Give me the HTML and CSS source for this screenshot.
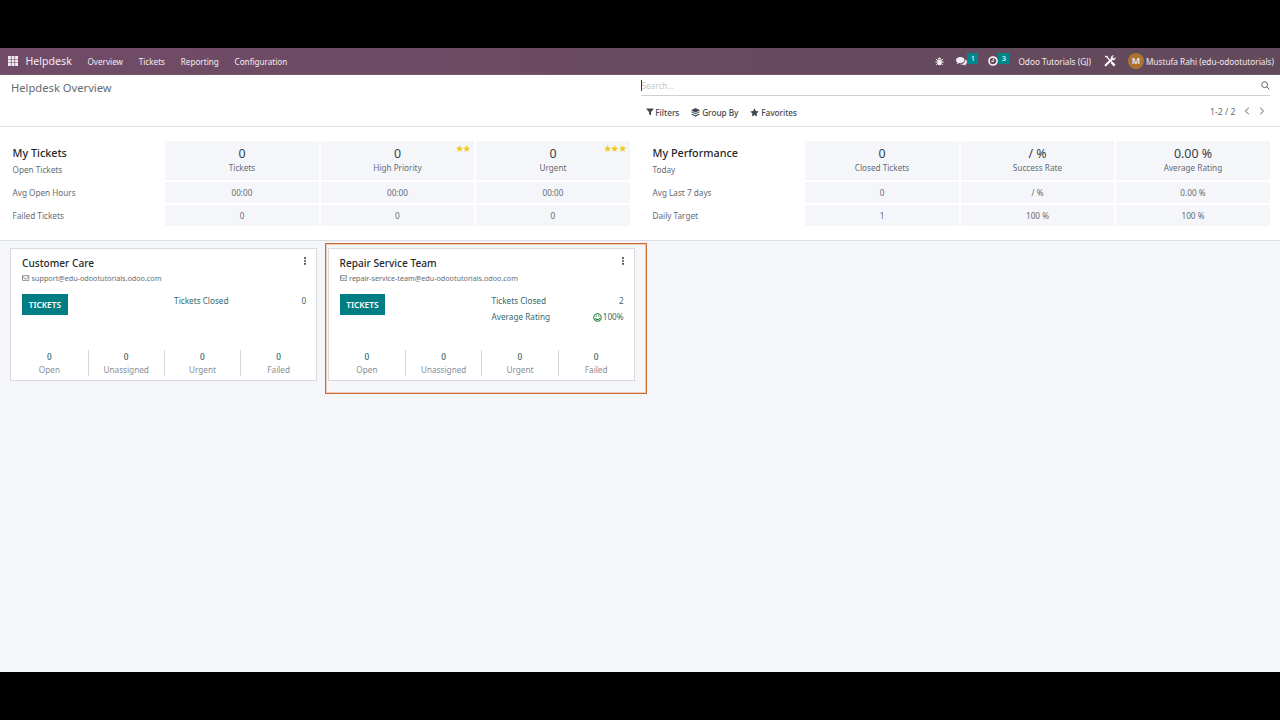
FILE: index.html
```html
<!DOCTYPE html>
<html lang="en">
<head>
<meta charset="UTF-8">
<meta name="viewport" content="width=device-width, initial-scale=1.0">
<title>Helpdesk Overview</title>
<link rel="stylesheet" href="styles.css">
</head>
<body>

<!-- shared icon shapes -->
<svg class="defs" width="0" height="0">
    <symbol id="star" viewBox="0 0 16 16"><path d="M8 .6l2.300 4.800 5.300.7-3.900 3.700 1 5.200L8 12.400 3.300 15l1-5.200L.4 6.100l5.300-.7z"/></symbol>
    <symbol id="mail" viewBox="0 0 16 12"><path d="M1 1h14v10H1zM1 3l5.500 4.300q1.500 1.100 3 0L15 3" fill="none" stroke="currentColor" stroke-width="1.600"/></symbol>
    <symbol id="dots" viewBox="0 0 4 12"><path d="M.8.500h2.400v2.400H.8zM.8 4.800h2.400v2.400H.8zM.8 9.100h2.400v2.400H.8z"/></symbol>
</svg>

<div class="screen">
    <nav class="navbar">
        <svg class="apps" viewBox="0 0 9 9"><path d="M0 0h2.600v2.600H0zM3.200 0h2.600v2.600H3.200zM6.400 0H9v2.600H6.400zM0 3.200h2.600v2.600H0zM3.200 3.200h2.600v2.600H3.200zM6.400 3.200H9v2.600H6.400zM0 6.400h2.600V9H0zM3.200 6.400h2.600V9H3.200zM6.400 6.400H9V9H6.400z"/></svg>
        <span class="brand">Helpdesk</span>
        <div class="menu">
            <span>Overview</span>
            <span>Tickets</span>
            <span>Reporting</span>
            <span>Configuration</span>
        </div>
        <div class="systray">
            <svg class="bug" viewBox="0 0 16 16"><path d="M5 4a3 3 0 0 1 6 0z"/><path d="M4 5h8v5.500a4 4 0 0 1-8 0z"/><path d="M1.500 3.500L4.500 6M14.500 3.500L11.500 6M.5 9H4M12 9h3.500M2 14l2.500-2.500M14 14l-2.500-2.500" stroke="#fff" stroke-width="1.500"/></svg>
            <span class="tray-item">
                <svg class="chat" viewBox="0 0 18 16"><path d="M7 1.500c3.900 0 7 2.200 7 5s-3.100 5-7 5c-.7 0-1.300-.1-1.900-.2C4 12.200 2.700 12.700 1 12.900c.7-.7 1.200-1.400 1.400-2.500C.9 9.500 0 8.100 0 6.500c0-2.800 3.100-5 7-5z"/><path d="M15 5.500c1.800.9 3 2.300 3 4 0 1.500-.9 2.800-2.300 3.700.2 1 .7 1.700 1.300 2.300-1.600-.1-2.900-.7-4-1.400-2.300.4-4.500 0-6-1 4.800 0 8.700-2.600 8-7.600z"/></svg>
                <b class="badge">1</b>
            </span>
            <span class="tray-item">
                <svg class="clock" viewBox="0 0 16 16"><circle cx="8" cy="8" r="6.500" fill="none" stroke="#fff" stroke-width="2.400"/><path d="M8.500 4v4.700H5.200" fill="none" stroke="#fff" stroke-width="1.500"/></svg>
                <b class="badge">3</b>
            </span>
            <span class="company">Odoo Tutorials (GJ)</span>
            <svg class="tools" viewBox="0 0 16 16"><path d="M1.500 1.500l3 1.200.8 1.800 6 6" fill="none" stroke="#fff" stroke-width="1.800"/><path d="M10.200 10l4 4.200" stroke="#fff" stroke-width="3.200"/><path d="M2.200 13.800L10.500 5.500" stroke="#fff" stroke-width="2.800" stroke-linecap="round"/><path d="M13.500.4C11 0 8.500 2 9 5.200L10.800 7c3.200.5 5.300-2 4.800-4.500l-2.300 2.200-2-2z"/></svg>
            <span class="avatar">M</span>
            <span class="user">Mustufa Rahi (edu-odootutorials)</span>
        </div>
    </nav>

    <header class="control-panel">
        <h1 class="title">Helpdesk Overview</h1>
        <div class="search-side">
            <div class="search">
                <span class="placeholder">Search...</span>
                <svg class="lens" viewBox="0 0 16 16"><circle cx="6.500" cy="6.500" r="5.200"/><path d="M10.300 10.300L15 15"/></svg>
            </div>
            <div class="tools-row">
                <span class="filter"><svg viewBox="0 0 16 16"><path d="M1 1h14v1.500L10 8v7l-4-3V8L1 2.500z"/></svg>Filters</span>
                <span class="filter group"><svg viewBox="0 0 16 16"><path d="M8 0l8 4-8 4-8-4zM1.800 6.300L8 9.400l6.200-3.100L16 7.300l-8 4-8-4zM1.800 10L8 13l6.200-3 1.800 1-8 4.500L0 11z"/></svg>Group By</span>
                <span class="filter fav"><svg><use href="#star"/></svg>Favorites</span>
                <span class="pager">1-2 / 2</span>
                <svg class="chev" viewBox="0 0 6 8"><path d="M4.800.7L1.500 4l3.300 3.300"/></svg>
                <svg class="chev next" viewBox="0 0 6 8"><path d="M1.200.7L4.500 4 1.200 7.300"/></svg>
            </div>
        </div>
    </header>

    <section class="dashboard">
        <div class="panel">
            <div class="label main"><strong>My Tickets</strong>Open Tickets</div>
            <div class="cell main"><strong>0</strong>Tickets</div>
            <div class="cell main"><strong>0</strong>High Priority<span class="stars"><svg><use href="#star"/></svg><svg><use href="#star"/></svg></span></div>
            <div class="cell main"><strong>0</strong>Urgent<span class="stars"><svg><use href="#star"/></svg><svg><use href="#star"/></svg><svg><use href="#star"/></svg></span></div>
            <div class="label">Avg Open Hours</div>
            <div class="cell">00:00</div>
            <div class="cell">00:00</div>
            <div class="cell">00:00</div>
            <div class="label">Failed Tickets</div>
            <div class="cell">0</div>
            <div class="cell">0</div>
            <div class="cell">0</div>
        </div>
        <div class="panel">
            <div class="label main"><strong>My Performance</strong>Today</div>
            <div class="cell main"><strong>0</strong>Closed Tickets</div>
            <div class="cell main"><strong>/ %</strong>Success Rate</div>
            <div class="cell main"><strong>0.00 %</strong>Average Rating</div>
            <div class="label">Avg Last 7 days</div>
            <div class="cell">0</div>
            <div class="cell">/ %</div>
            <div class="cell">0.00 %</div>
            <div class="label">Daily Target</div>
            <div class="cell">1</div>
            <div class="cell">100 %</div>
            <div class="cell">100 %</div>
        </div>
    </section>

    <main class="kanban">
        <article class="card">
            <div class="card-head"><h2>Customer Care</h2><svg class="dots"><use href="#dots"/></svg></div>
            <div class="email"><svg><use href="#mail"/></svg>support@edu-odootutorials.odoo.com</div>
            <div class="card-body">
                <button class="btn">TICKETS</button>
                <div class="facts">
                    <div><span>Tickets Closed</span><span>0</span></div>
                </div>
            </div>
            <div class="stats">
                <div><b>0</b>Open</div>
                <div><b>0</b>Unassigned</div>
                <div><b>0</b>Urgent</div>
                <div><b>0</b>Failed</div>
            </div>
        </article>
        <article class="card highlighted">
            <div class="card-head"><h2>Repair Service Team</h2><svg class="dots"><use href="#dots"/></svg></div>
            <div class="email"><svg><use href="#mail"/></svg>repair-service-team@edu-odootutorials.odoo.com</div>
            <div class="card-body">
                <button class="btn">TICKETS</button>
                <div class="facts">
                    <div><span>Tickets Closed</span><span>2</span></div>
                    <div><span>Average Rating</span><span class="rating"><svg viewBox="0 0 16 16"><circle cx="8" cy="8" r="6.600"/><path d="M4.300 9.300c1.500 3.300 5.900 3.300 7.400 0M5.700 4.600v2.200M10.300 4.600v2.200"/></svg>100%</span></div>
                </div>
            </div>
            <div class="stats">
                <div><b>0</b>Open</div>
                <div><b>0</b>Unassigned</div>
                <div><b>0</b>Urgent</div>
                <div><b>0</b>Failed</div>
            </div>
        </article>
    </main>
</div>

</body>
</html>
```

FILE: styles.css
```css
* {
    box-sizing: border-box;
}
body {
    margin: 0;
    height: 720px;
    padding: 48px 0;
    overflow: hidden;
    background: #000;
    font-family: "Noto Sans", "Open Sans", sans-serif;
    font-size: 8.2px;
    color: #666b72;
    white-space: nowrap;
}
svg {
    fill: currentColor;
    flex: none;
}
.defs {
    position: absolute;
}
.screen {
    height: 624px;
    background: #f5f6fa;
}

/* top bar */
.navbar {
    display: flex;
    align-items: center;
    height: 27px;
    padding: 0 6px 0 8px;
    background: linear-gradient(90deg, #714b67, #62495b);
    border-bottom: 1px solid #755a6d;
    color: #f3edf1;
}
.apps {
    width: 10px;
    height: 10px;
    margin-right: 7.5px;
}
.brand {
    width: 62px;
    font-size: 10.6px;
}
.menu {
    display: flex;
    gap: 15.8px;
    font-size: 8.15px;
}
.systray {
    display: flex;
    align-items: center;
    margin-left: auto;
    font-size: 8.25px;
}
.bug {
    width: 9px;
    height: 9px;
    margin-right: 12px;
}
.tray-item {
    display: flex;
    align-items: center;
}
.chat {
    width: 11px;
    height: 10px;
}
.clock {
    width: 10px;
    height: 10px;
    margin-left: 10px;
}
.badge {
    width: 11px;
    height: 11px;
    margin-top: -5px;
    background: #00878a;
    font-size: 7.5px;
    font-weight: 500;
    line-height: 11px;
    text-align: center;
}
.company {
    margin-left: 9px;
}
.tools {
    width: 12px;
    height: 12px;
    margin: 0 12px 0 13px;
}
.avatar {
    width: 16px;
    height: 16px;
    margin-right: 2px;
    border-radius: 50%;
    background: #aa7430;
    font-size: 9px;
    font-weight: 600;
    line-height: 16px;
    text-align: center;
}

/* title and search */
.control-panel {
    display: flex;
    height: 52px;
    padding-left: 11px;
    background: #fff;
    border-bottom: 1px solid #dfe0e3;
}
.title {
    width: 629.5px;
    margin: 5px 0 0;
    font-size: 11.2px;
    font-weight: 400;
    line-height: 16px;
}
.search-side {
    width: 629px;
}
.search {
    display: flex;
    align-items: center;
    justify-content: space-between;
    height: 21px;
    border-bottom: 1px solid #cfd0d2;
}
.placeholder {
    border-left: 1px solid #333;
    color: #c5c7ca;
    line-height: 11px;
}
.lens {
    width: 9px;
    height: 9px;
    fill: none;
    stroke: #555;
    stroke-width: 1.6;
}
.tools-row {
    display: flex;
    align-items: center;
    height: 32px;
    padding: 0 5px 0 5px;
}
.filter {
    display: flex;
    align-items: center;
    gap: 1.8px;
    margin-right: 12px;
    color: #43474d;
    font-weight: 500;
}
.filter svg {
    width: 8px;
    height: 8px;
}
.filter.group svg,
.filter.fav svg {
    width: 9px;
    height: 9px;
}
.pager {
    margin-left: auto;
    margin-right: 8.5px;
    font-size: 8.7px;
}
.chev {
    width: 6px;
    height: 8px;
    margin: -3px 8.5px 0 0;
    fill: none;
    stroke: #a4a6aa;
    stroke-width: 1.3;
}
.chev.next {
    margin-right: 0;
}

/* figures */
.dashboard {
    display: grid;
    grid-template-columns: 618px 618px;
    column-gap: 22px;
    height: 114px;
    padding: 14px 12px 0;
    background: #fff;
    border-bottom: 1px solid #dcdee3;
}
.panel {
    display: grid;
    grid-template-columns: 151.4px 153.8px 153.8px 153.8px;
    grid-template-rows: 39px 20.5px 21px;
    gap: 2px 1.7px;
}
.label,
.cell {
    line-height: 21px;
}
.label {
    padding-left: .5px;
}
.label.main,
.cell.main {
    line-height: 13px;
}
.label.main {
    padding-top: 4px;
}
.label strong {
    display: block;
    margin-bottom: 2px;
    color: #24272c;
    font-size: 10.8px;
    font-weight: 500;
    line-height: 15px;
    padding-bottom: 1px;
}
.cell {
    position: relative;
    background: #f5f6fa;
    text-align: center;
}
.cell.main {
    padding-top: 5px;
}
.cell strong {
    display: block;
    color: #393d44;
    font-size: 12.4px;
    font-weight: 400;
    line-height: 15px;
}
.stars {
    position: absolute;
    top: 4px;
    right: 4px;
    display: flex;
    color: #eccb22;
}
.stars svg {
    width: 7.2px;
    height: 7.2px;
}

/* teams */
.kanban {
    display: flex;
    gap: 10.5px;
    padding: 7px 10.3px;
}
.card {
    position: relative;
    display: flex;
    flex-direction: column;
    width: 307px;
    height: 133px;
    background: #fff;
    border: 1px solid #d8dae0;
}
/* outline around the selected team */
.card.highlighted::after {
    content: "";
    position: absolute;
    inset: -6px -13px -14px -4px;
    border: 1px solid #cb6a30;
    box-shadow: inset 0 0 0 1px #efccb6;
}
.card-head {
    display: flex;
    justify-content: space-between;
    padding: 6px 9px 0 10.8px;
}
.card h2 {
    margin: 0;
    color: #25282d;
    font-size: 10.1px;
    font-weight: 500;
    line-height: 16px;
}
.dots {
    width: 4px;
    height: 8px;
    margin-top: 2px;
    color: #222;
}
.email {
    display: flex;
    align-items: center;
    gap: 2px;
    height: 13px;
    margin-bottom: 1px;
    padding-left: 10.8px;
    font-size: 7.2px;
}
.email svg {
    width: 7.5px;
    height: 6px;
}
.card-body {
    display: flex;
    align-items: flex-start;
    padding: 9px 10.2px 0 10.8px;
}
.btn {
    width: 45.5px;
    height: 21px;
    padding: 0;
    border: 0;
    background: #017e84;
    color: #fff;
    font: 600 8.3px "Noto Sans", sans-serif;
}
.facts {
    width: 132px;
    margin: -1px 0 0 auto;
    color: #35696b;
    line-height: 16px;
}
.facts div {
    display: flex;
    justify-content: space-between;
}
.rating {
    display: flex;
    align-items: center;
    gap: 1px;
}
.rating svg {
    width: 9px;
    height: 9px;
    fill: none;
    stroke: #28823c;
    stroke-width: 2;
}
.stats {
    display: grid;
    grid-template-columns: repeat(4, 1fr);
    margin-top: auto;
    margin-bottom: 4px;
    color: #8a8e94;
    text-align: center;
    line-height: 13px;
}
.stats div + div {
    border-left: 1px solid #d5d7db;
}
.stats b {
    display: block;
    color: #2c5f63;
    font-weight: 500;
}
```
